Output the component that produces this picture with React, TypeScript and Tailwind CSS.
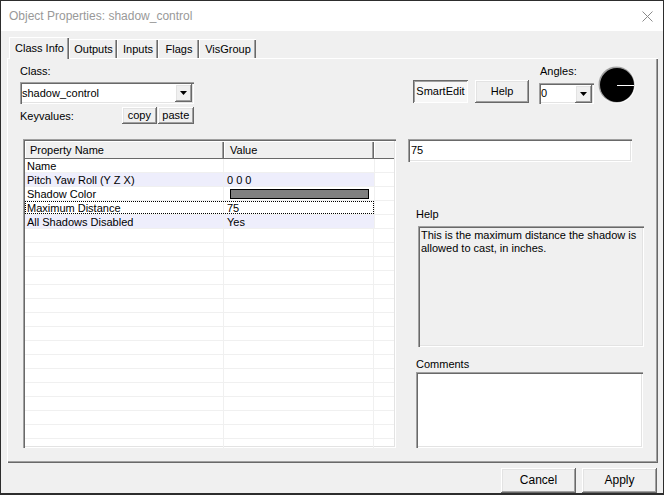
import React from 'react';

const raised =
  'bg-[#f0f0f0] shadow-[inset_-1px_-1px_0_#696969,inset_1px_1px_0_#ffffff,inset_-2px_-2px_0_#a0a0a0,inset_2px_2px_0_#e3e3e3]';
const sunken =
  'shadow-[inset_1px_1px_0_#a0a0a0,inset_2px_2px_0_#696969,inset_-1px_-1px_0_#ffffff,inset_-2px_-2px_0_#e3e3e3]';

const ArrowButton = () => (
  <div className={`flex h-[18px] w-[17px] items-center justify-center ${raised}`}>
    <svg width="7" height="4" viewBox="0 0 7 4">
      <path d="M0 0h7L3.5 4z" fill="#000" />
    </svg>
  </div>
);

interface Row {
  name: string;
  value?: string;
  alt?: boolean;
  swatch?: boolean;
  focus?: boolean;
}

const rows: Row[] = [
  { name: 'Name', value: '' },
  { name: 'Pitch Yaw Roll (Y Z X)', value: '0 0 0', alt: true },
  { name: 'Shadow Color', swatch: true },
  { name: 'Maximum Distance', value: '75', focus: true },
  { name: 'All Shadows Disabled', value: 'Yes', alt: true },
];

const emptyRows = Array.from({ length: 16 }, (_, i) => i);

const tabs = ['Outputs', 'Inputs', 'Flags', 'VisGroup'];
const tabWidths = ['w-[48px]', 'w-[41px]', 'w-[41px]', 'w-[57px]'];

export default function App() {
  return (
    <div className="h-[495px] w-[664px] overflow-hidden bg-[#2d2d2d] font-['Liberation_Sans',Arial,sans-serif] text-[11px] leading-[13px] text-black">
      <div className="ml-px mt-px flex h-[492px] w-[662px] flex-col bg-[#f0f0f0]">
        {/* title bar */}
        <div className="flex h-[30px] shrink-0 items-center justify-between bg-white pl-[8px] pr-[10px]">
          <span className="text-[12px] text-[#999999]">Object Properties: shadow_control</span>
          <svg width="11" height="11" viewBox="0 0 11 11">
            <path d="M0.5 0.5l10 10M10.5 0.5l-10 10" stroke="#8a8a8a" strokeWidth="1" />
          </svg>
        </div>

        {/* tabs */}
        <div className="relative z-10 mt-[6px] flex h-[21px] items-end pl-[8px]">
          <div className="mb-[-1px] flex h-[22px] w-[60px] items-start justify-center border-l border-t border-white bg-[#f0f0f0] pt-[4px] shadow-[inset_-1px_0_0_#696969,inset_-2px_0_0_#a0a0a0]">
            Class Info
          </div>
          {tabs.map((t, i) => (
            <div
              key={t}
              className={`flex h-[19px] ${tabWidths[i]} items-start justify-center border-l border-t border-white pt-[3px] shadow-[inset_-1px_0_0_#696969,inset_-2px_0_0_#a0a0a0]`}
            >
              {t}
            </div>
          ))}
        </div>

        {/* panel */}
        <div className="ml-[6px] flex h-[406px] w-[651px] flex-col border-l border-t border-white pl-[12px] pt-[6px] shadow-[inset_-1px_-1px_0_#696969,inset_-2px_-2px_0_#a0a0a0]">
          <div className="flex">
            {/* class column */}
            <div className="flex w-[174px] flex-col">
              <div className="h-[13px]">Class:</div>
              <div className={`mt-[4px] flex h-[22px] items-center bg-white p-[2px] ${sunken}`}>
                <span className="flex-1">shadow_control</span>
                <ArrowButton />
              </div>
              <div className="mt-[3px] flex h-[17px] items-end">
                <span className="pb-[1px]">Keyvalues:</span>
                <div className={`ml-[48px] flex h-[17px] w-[35px] items-center justify-center ${raised}`}>copy</div>
                <div className={`ml-px flex h-[17px] w-[36px] items-center justify-center ${raised}`}>paste</div>
              </div>
            </div>

            {/* right controls */}
            <div className="ml-[219px] flex items-start">
              <div className="mt-[15px] flex h-[23px] w-[55px] items-center justify-center bg-[#f7f7f7] shadow-[inset_1px_1px_0_#696969,inset_-1px_-1px_0_#ffffff,inset_2px_2px_0_#a0a0a0]">
                SmartEdit
              </div>
              <div className={`ml-[7px] mt-[15px] flex h-[23px] w-[54px] items-center justify-center ${raised}`}>
                Help
              </div>
              <div className="ml-[10px] flex w-[55px] flex-col">
                <div className="h-[13px] pl-[1px]">Angles:</div>
                <div className={`mt-[5px] flex h-[21px] items-center bg-white p-[2px] ${sunken}`}>
                  <span className="flex-1">0</span>
                  <ArrowButton />
                </div>
              </div>
              <svg className="ml-[4px] mt-px" width="38" height="38" viewBox="0 0 38 38">
                <circle cx="19" cy="19" r="18.5" fill="#ffffff" />
                <circle cx="18.5" cy="18.5" r="18" fill="#a0a0a0" />
                <circle cx="19" cy="19" r="17" fill="#000000" />
                <line x1="19" y1="19.5" x2="36" y2="19.5" stroke="#ffffff" strokeWidth="1" />
              </svg>
            </div>
          </div>

          <div className="mt-[15px] flex">
            {/* property table */}
            <div className={`ml-[3px] flex h-[309px] w-[373px] flex-col overflow-hidden bg-white p-[2px] ${sunken}`}>
              <div className="flex h-[18px] shrink-0 border-b border-[#696969]">
                <div className="flex w-[199px] items-center border-l border-t border-white bg-[#f0f0f0] pl-[4px] shadow-[inset_-1px_0_0_#696969,inset_-2px_0_0_#a0a0a0]">
                  Property Name
                </div>
                <div className="flex w-[150px] items-center border-l border-t border-white bg-[#f0f0f0] pl-[5px] shadow-[inset_-1px_0_0_#696969,inset_-2px_0_0_#a0a0a0]">
                  Value
                </div>
                <div className="flex-1 border-l border-t border-white bg-[#f0f0f0]" />
              </div>
              {rows.map((r) => (
                <div key={r.name} className="flex h-[14px] shrink-0 border-b border-[#f0f0f0]">
                  <div
                    className={`flex w-[349px] ${r.alt ? 'bg-[#eeeefc]' : ''} ${
                      r.focus ? 'outline-1 -outline-offset-1 outline-dotted outline-black' : ''
                    }`}
                  >
                    <div className="w-[199px] border-r border-[#f0f0f0] pl-[2px] pt-px">{r.name}</div>
                    <div className="flex-1 pl-[3px] pt-px">
                      {r.swatch ? (
                        <div className="ml-[3px] mt-px h-[10px] w-[139px] border border-black bg-[#808080]" />
                      ) : (
                        r.value
                      )}
                    </div>
                  </div>
                  <div className="flex-1 border-l border-[#f0f0f0]" />
                </div>
              ))}
              {emptyRows.map((i) => (
                <div key={i} className="flex h-[14px] shrink-0 border-b border-[#f0f0f0]">
                  <div className="w-[199px] border-r border-[#f0f0f0]" />
                  <div className="w-[150px] border-r border-[#f0f0f0]" />
                  <div className="flex-1" />
                </div>
              ))}
            </div>

            {/* right column */}
            <div className="ml-[12px] flex flex-col">
              <div className={`flex h-[23px] w-[224px] items-center bg-white pl-[3px] ${sunken}`}>75</div>
              <div className="ml-[8px] mt-[46px] h-[13px]">Help</div>
              <div className={`ml-[10px] mt-[5px] h-[121px] w-[226px] bg-[#f0f0f0] px-[3px] pt-[3px] ${sunken}`}>
                This is the maximum distance the shadow is
                <br />
                allowed to cast, in inches.
              </div>
              <div className="ml-[8px] mt-[11px] h-[13px]">Comments</div>
              <div className={`ml-[8px] mt-[1px] h-[76px] w-[227px] bg-white ${sunken}`} />
            </div>
          </div>
        </div>

        {/* bottom buttons */}
        <div className="mt-[5px] flex justify-end gap-[6px] pr-[6px]">
          <div className={`flex h-[25px] w-[75px] items-center justify-center text-[12px] ${raised}`}>Cancel</div>
          <div className={`flex h-[25px] w-[75px] items-center justify-center text-[12px] ${raised}`}>Apply</div>
        </div>
      </div>
    </div>
  );
}
